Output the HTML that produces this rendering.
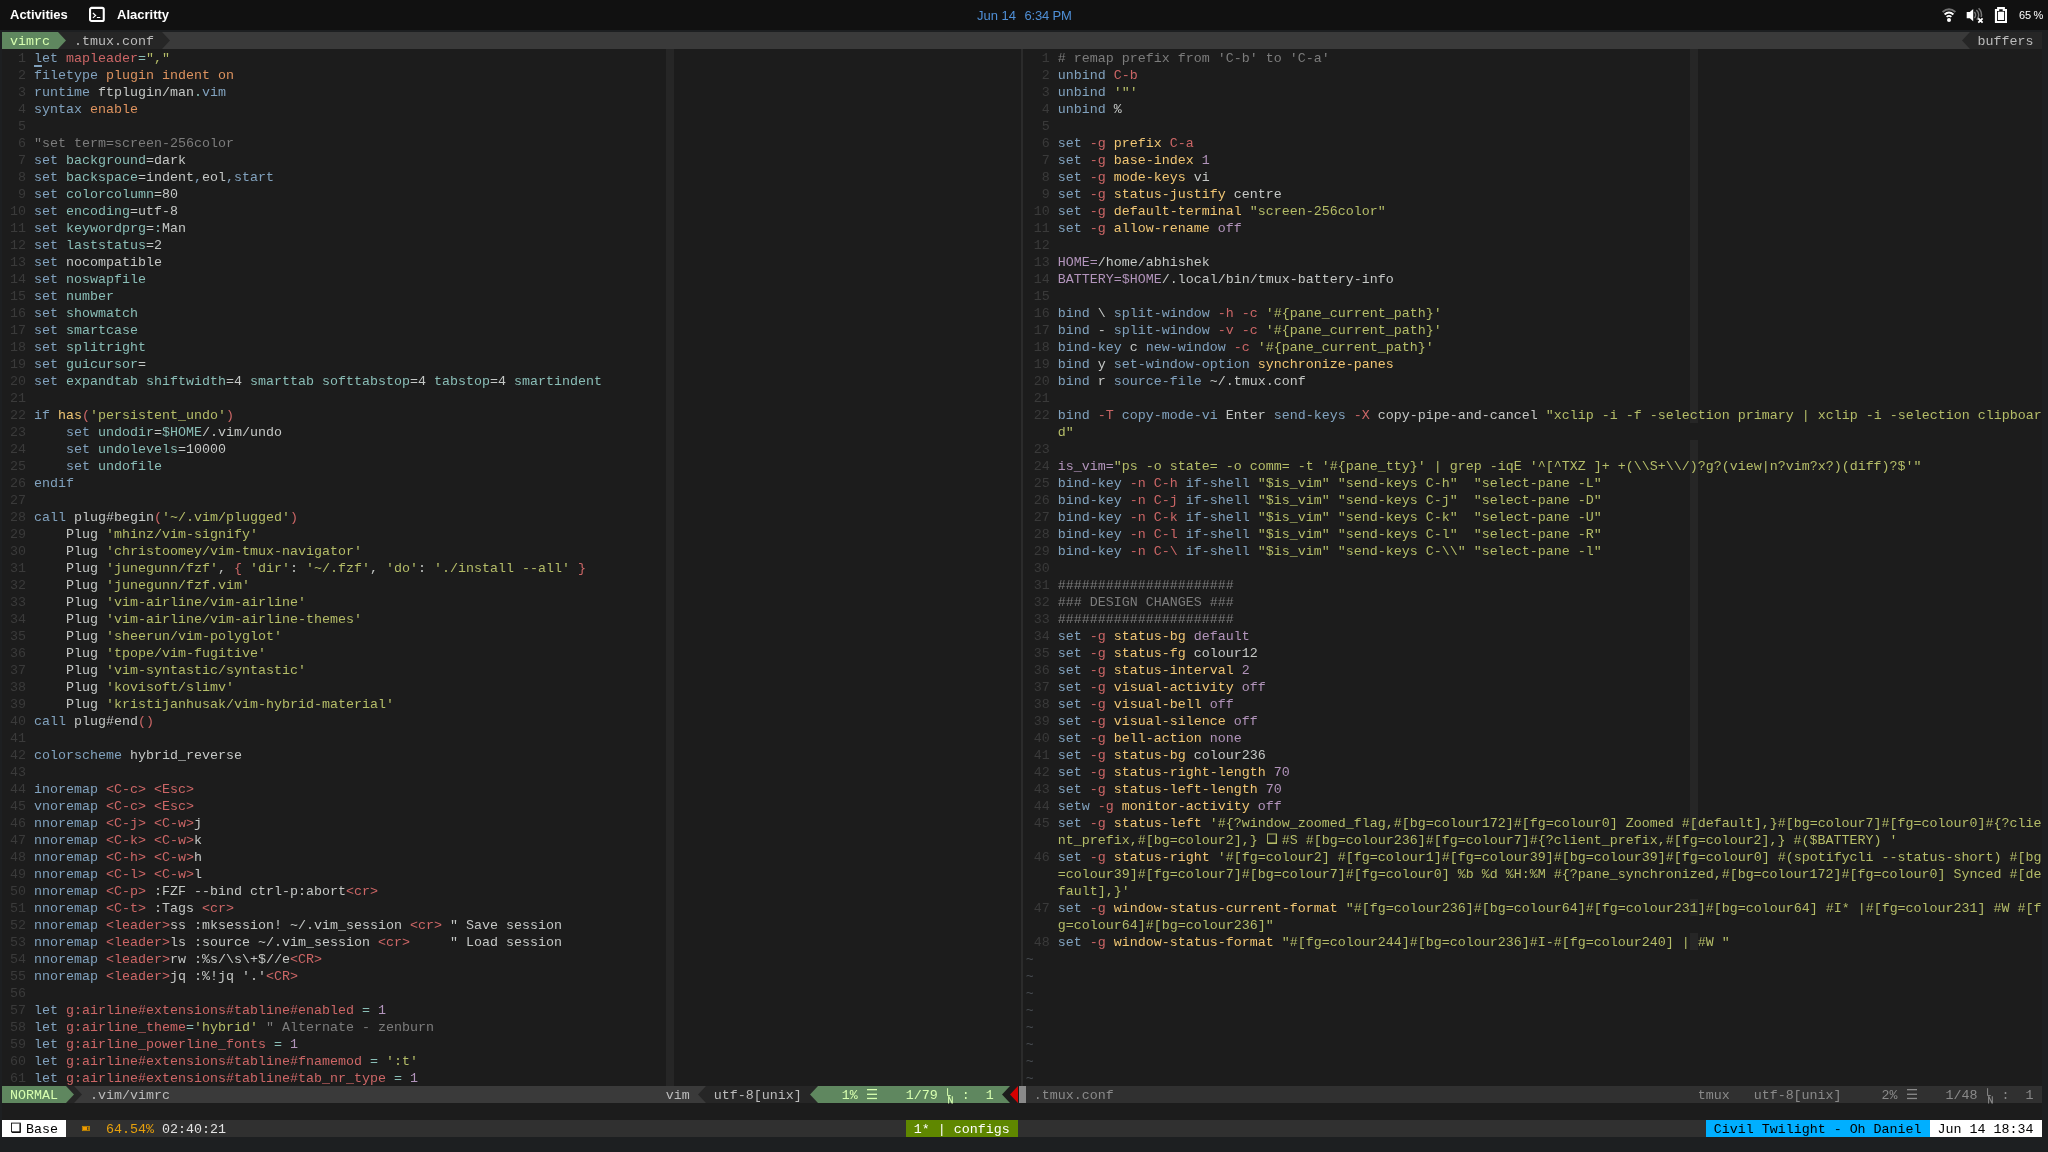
<!DOCTYPE html>
<html><head><meta charset="utf-8"><style>
html,body{margin:0;padding:0;}
body{width:2048px;height:1152px;overflow:hidden;background:#1d1f21;position:relative;}
#vim{position:absolute;left:2px;top:32px;width:2040px;height:1105px;background:#1c1c1c;}
#top{position:absolute;left:0;top:0;width:2048px;height:30px;background:#111111;}
.tb{position:absolute;top:7px;height:16px;line-height:16px;font-family:"Liberation Sans",sans-serif;font-size:13px;font-weight:bold;color:#fff;white-space:pre;}
.bg{position:absolute;height:17px;}
.row{position:absolute;left:2px;height:17px;line-height:17px;font-family:"Liberation Mono",monospace;font-size:13.3312px;white-space:pre;color:#c5c8c6;}
</style></head><body>
<div style="position:absolute;left:0;top:0;width:2048px;height:1152px;will-change:transform">
<div id="vim"></div>

<div id="top"></div>
<div class="tb" style="left:10px;">Activities</div>
<svg style="position:absolute;left:88px;top:6px" width="18" height="17" viewBox="0 0 18 17">
  <rect x="2.05" y="1.9" width="13.7" height="13.1" rx="1.6" ry="1.6" fill="none" stroke="#fff" stroke-width="2.1"/>
  <path d="M4.9 7 L7.6 9.45 L4.9 11.9" fill="none" stroke="#fff" stroke-width="1.25"/>
  <path d="M8.9 11.5 H12.25" stroke="#fff" stroke-width="1.05"/>
</svg>
<div class="tb" style="left:117px;">Alacritty</div>
<div class="tb" style="left:977px;top:8px;color:#4f8fd6;font-weight:normal;">Jun 14</div><div class="tb" style="left:1024.5px;top:8px;color:#4f8fd6;font-weight:normal;letter-spacing:-0.2px">6:34 PM</div>
<svg style="position:absolute;left:1940px;top:6px" width="110" height="20" viewBox="0 0 110 20">
  <g fill="none" stroke-linecap="butt">
    <path d="M2.6 5.9 Q9 0.6 15.4 5.9" stroke="#707070" stroke-width="2"/>
    <path d="M4.6 8.5 Q9 4.6 13.4 8.5" stroke="#fff" stroke-width="2"/>
    <path d="M6.6 10.9 Q9 8.9 11.4 10.9" stroke="#fff" stroke-width="1.8"/>
  </g>
  <circle cx="9" cy="14.1" r="2" fill="#fff"/>
  <path d="M26.7 5.9 H29.8 L33.2 2.9 V15.2 L29.8 12.2 H26.7 Z" fill="#fff"/>
  <path d="M34.4 6 A4.2 4.2 0 0 1 34.4 12" fill="none" stroke="#777" stroke-width="1.4"/>
  <path d="M36.4 4 A6.8 6.8 0 0 1 36.8 13.8" fill="none" stroke="#777" stroke-width="1.4"/>
  <path d="M38.6 2.2 A9.4 9.4 0 0 1 41.2 11" fill="none" stroke="#777" stroke-width="1.5"/>
  <path d="M38.3 12.3 L42.6 16.6 M42.6 12.3 L38.3 16.6" stroke="#fff" stroke-width="1.8"/>
  <path d="M54.9 2.9 H57.1 V1.05 H64.9 V2.9 H67 V17.1 H54.9 Z M57 5.1 H59.2 V3.2 H62.7 V5.1 H65 V14.9 H57 Z" fill="#fff" fill-rule="evenodd"/>
  <rect x="57.9" y="5.7" width="6.2" height="8.3" fill="#fff"/>
</svg>
<div class="tb" style="left:2019px;font-weight:normal;font-size:11px;top:6.6px">65&#8201;%</div>

<div class="bg" style="left:2px;top:32px;width:56px;background:#5f875f"></div>
<div class="bg" style="left:58px;top:32px;width:104px;background:#262626"></div>
<div class="bg" style="left:162px;top:32px;width:1808px;background:#3a3a3a"></div>
<div class="bg" style="left:1970px;top:32px;width:72px;background:#262626"></div>
<div class="bg" style="left:666px;top:49px;width:8px;background:#262626"></div>
<div class="bg" style="left:1690px;top:49px;width:8px;background:#262626"></div>
<div class="bg" style="left:666px;top:66px;width:8px;background:#262626"></div>
<div class="bg" style="left:1690px;top:66px;width:8px;background:#262626"></div>
<div class="bg" style="left:666px;top:83px;width:8px;background:#262626"></div>
<div class="bg" style="left:1690px;top:83px;width:8px;background:#262626"></div>
<div class="bg" style="left:666px;top:100px;width:8px;background:#262626"></div>
<div class="bg" style="left:1690px;top:100px;width:8px;background:#262626"></div>
<div class="bg" style="left:666px;top:117px;width:8px;background:#262626"></div>
<div class="bg" style="left:1690px;top:117px;width:8px;background:#262626"></div>
<div class="bg" style="left:666px;top:134px;width:8px;background:#262626"></div>
<div class="bg" style="left:1690px;top:134px;width:8px;background:#262626"></div>
<div class="bg" style="left:666px;top:151px;width:8px;background:#262626"></div>
<div class="bg" style="left:1690px;top:151px;width:8px;background:#262626"></div>
<div class="bg" style="left:666px;top:168px;width:8px;background:#262626"></div>
<div class="bg" style="left:1690px;top:168px;width:8px;background:#262626"></div>
<div class="bg" style="left:666px;top:185px;width:8px;background:#262626"></div>
<div class="bg" style="left:1690px;top:185px;width:8px;background:#262626"></div>
<div class="bg" style="left:666px;top:202px;width:8px;background:#262626"></div>
<div class="bg" style="left:1690px;top:202px;width:8px;background:#262626"></div>
<div class="bg" style="left:666px;top:219px;width:8px;background:#262626"></div>
<div class="bg" style="left:1690px;top:219px;width:8px;background:#262626"></div>
<div class="bg" style="left:666px;top:236px;width:8px;background:#262626"></div>
<div class="bg" style="left:1690px;top:236px;width:8px;background:#262626"></div>
<div class="bg" style="left:666px;top:253px;width:8px;background:#262626"></div>
<div class="bg" style="left:1690px;top:253px;width:8px;background:#262626"></div>
<div class="bg" style="left:666px;top:270px;width:8px;background:#262626"></div>
<div class="bg" style="left:1690px;top:270px;width:8px;background:#262626"></div>
<div class="bg" style="left:666px;top:287px;width:8px;background:#262626"></div>
<div class="bg" style="left:1690px;top:287px;width:8px;background:#262626"></div>
<div class="bg" style="left:666px;top:304px;width:8px;background:#262626"></div>
<div class="bg" style="left:1690px;top:304px;width:8px;background:#262626"></div>
<div class="bg" style="left:666px;top:321px;width:8px;background:#262626"></div>
<div class="bg" style="left:1690px;top:321px;width:8px;background:#262626"></div>
<div class="bg" style="left:666px;top:338px;width:8px;background:#262626"></div>
<div class="bg" style="left:1690px;top:338px;width:8px;background:#262626"></div>
<div class="bg" style="left:666px;top:355px;width:8px;background:#262626"></div>
<div class="bg" style="left:1690px;top:355px;width:8px;background:#262626"></div>
<div class="bg" style="left:666px;top:372px;width:8px;background:#262626"></div>
<div class="bg" style="left:1690px;top:372px;width:8px;background:#262626"></div>
<div class="bg" style="left:666px;top:389px;width:8px;background:#262626"></div>
<div class="bg" style="left:1690px;top:389px;width:8px;background:#262626"></div>
<div class="bg" style="left:666px;top:406px;width:8px;background:#262626"></div>
<div class="bg" style="left:1690px;top:406px;width:8px;background:#262626"></div>
<div class="bg" style="left:666px;top:423px;width:8px;background:#262626"></div>
<div class="bg" style="left:666px;top:440px;width:8px;background:#262626"></div>
<div class="bg" style="left:1690px;top:440px;width:8px;background:#262626"></div>
<div class="bg" style="left:666px;top:457px;width:8px;background:#262626"></div>
<div class="bg" style="left:1690px;top:457px;width:8px;background:#262626"></div>
<div class="bg" style="left:666px;top:474px;width:8px;background:#262626"></div>
<div class="bg" style="left:1690px;top:474px;width:8px;background:#262626"></div>
<div class="bg" style="left:666px;top:491px;width:8px;background:#262626"></div>
<div class="bg" style="left:1690px;top:491px;width:8px;background:#262626"></div>
<div class="bg" style="left:666px;top:508px;width:8px;background:#262626"></div>
<div class="bg" style="left:1690px;top:508px;width:8px;background:#262626"></div>
<div class="bg" style="left:666px;top:525px;width:8px;background:#262626"></div>
<div class="bg" style="left:1690px;top:525px;width:8px;background:#262626"></div>
<div class="bg" style="left:666px;top:542px;width:8px;background:#262626"></div>
<div class="bg" style="left:1690px;top:542px;width:8px;background:#262626"></div>
<div class="bg" style="left:666px;top:559px;width:8px;background:#262626"></div>
<div class="bg" style="left:1690px;top:559px;width:8px;background:#262626"></div>
<div class="bg" style="left:666px;top:576px;width:8px;background:#262626"></div>
<div class="bg" style="left:1690px;top:576px;width:8px;background:#262626"></div>
<div class="bg" style="left:666px;top:593px;width:8px;background:#262626"></div>
<div class="bg" style="left:1690px;top:593px;width:8px;background:#262626"></div>
<div class="bg" style="left:666px;top:610px;width:8px;background:#262626"></div>
<div class="bg" style="left:1690px;top:610px;width:8px;background:#262626"></div>
<div class="bg" style="left:666px;top:627px;width:8px;background:#262626"></div>
<div class="bg" style="left:1690px;top:627px;width:8px;background:#262626"></div>
<div class="bg" style="left:666px;top:644px;width:8px;background:#262626"></div>
<div class="bg" style="left:1690px;top:644px;width:8px;background:#262626"></div>
<div class="bg" style="left:666px;top:661px;width:8px;background:#262626"></div>
<div class="bg" style="left:1690px;top:661px;width:8px;background:#262626"></div>
<div class="bg" style="left:666px;top:678px;width:8px;background:#262626"></div>
<div class="bg" style="left:1690px;top:678px;width:8px;background:#262626"></div>
<div class="bg" style="left:666px;top:695px;width:8px;background:#262626"></div>
<div class="bg" style="left:1690px;top:695px;width:8px;background:#262626"></div>
<div class="bg" style="left:666px;top:712px;width:8px;background:#262626"></div>
<div class="bg" style="left:1690px;top:712px;width:8px;background:#262626"></div>
<div class="bg" style="left:666px;top:729px;width:8px;background:#262626"></div>
<div class="bg" style="left:1690px;top:729px;width:8px;background:#262626"></div>
<div class="bg" style="left:666px;top:746px;width:8px;background:#262626"></div>
<div class="bg" style="left:1690px;top:746px;width:8px;background:#262626"></div>
<div class="bg" style="left:666px;top:763px;width:8px;background:#262626"></div>
<div class="bg" style="left:1690px;top:763px;width:8px;background:#262626"></div>
<div class="bg" style="left:666px;top:780px;width:8px;background:#262626"></div>
<div class="bg" style="left:1690px;top:780px;width:8px;background:#262626"></div>
<div class="bg" style="left:666px;top:797px;width:8px;background:#262626"></div>
<div class="bg" style="left:1690px;top:797px;width:8px;background:#262626"></div>
<div class="bg" style="left:666px;top:814px;width:8px;background:#262626"></div>
<div class="bg" style="left:1690px;top:814px;width:8px;background:#262626"></div>
<div class="bg" style="left:666px;top:831px;width:8px;background:#262626"></div>
<div class="bg" style="left:666px;top:848px;width:8px;background:#262626"></div>
<div class="bg" style="left:1690px;top:848px;width:8px;background:#262626"></div>
<div class="bg" style="left:666px;top:865px;width:8px;background:#262626"></div>
<div class="bg" style="left:666px;top:882px;width:8px;background:#262626"></div>
<div class="bg" style="left:666px;top:899px;width:8px;background:#262626"></div>
<div class="bg" style="left:1690px;top:899px;width:8px;background:#262626"></div>
<div class="bg" style="left:666px;top:916px;width:8px;background:#262626"></div>
<div class="bg" style="left:666px;top:933px;width:8px;background:#262626"></div>
<div class="bg" style="left:1690px;top:933px;width:8px;background:#262626"></div>
<div class="bg" style="left:666px;top:950px;width:8px;background:#262626"></div>
<div class="bg" style="left:666px;top:967px;width:8px;background:#262626"></div>
<div class="bg" style="left:666px;top:984px;width:8px;background:#262626"></div>
<div class="bg" style="left:666px;top:1001px;width:8px;background:#262626"></div>
<div class="bg" style="left:666px;top:1018px;width:8px;background:#262626"></div>
<div class="bg" style="left:666px;top:1035px;width:8px;background:#262626"></div>
<div class="bg" style="left:666px;top:1052px;width:8px;background:#262626"></div>
<div class="bg" style="left:666px;top:1069px;width:8px;background:#262626"></div>
<div class="bg" style="left:2px;top:1086px;width:64px;background:#5f875f"></div>
<div class="bg" style="left:66px;top:1086px;width:8px;background:#262626"></div>
<div class="bg" style="left:74px;top:1086px;width:632px;background:#3a3a3a"></div>
<div class="bg" style="left:706px;top:1086px;width:112px;background:#262626"></div>
<div class="bg" style="left:818px;top:1086px;width:192px;background:#5f875f"></div>
<div class="bg" style="left:1026px;top:1086px;width:1016px;background:#303030"></div>
<div class="bg" style="left:2px;top:1120px;width:64px;background:#ffffff"></div>
<div class="bg" style="left:66px;top:1120px;width:840px;background:#303030"></div>
<div class="bg" style="left:906px;top:1120px;width:112px;background:#5f8700"></div>
<div class="bg" style="left:1018px;top:1120px;width:688px;background:#303030"></div>
<div class="bg" style="left:1706px;top:1120px;width:224px;background:#00afff"></div>
<div class="bg" style="left:1930px;top:1120px;width:112px;background:#ffffff"></div>
<div class="row" style="top:33px"> <span style="color:#d7ffaf">vimrc   </span><span style="color:#bcbcbc">.tmux.conf                                                                                                                                                                                                                                    buffers</span></div>
<div class="row" style="top:50px">  <span style="color:#3a3a3a">1 </span><span style="color:#81a2be">let </span><span style="color:#cc6666">mapleader</span><span style="color:#8abeb7">=</span><span style="color:#b5bd68">&quot;,&quot;                                                                                                             </span><span style="color:#3a3a3a">1 </span><span style="color:#7c7c7c"># remap prefix from &#x27;C-b&#x27; to &#x27;C-a&#x27;</span></div>
<div class="row" style="top:67px">  <span style="color:#3a3a3a">2 </span><span style="color:#81a2be">filetype </span><span style="color:#de935f">plugin indent on                                                                                                     </span><span style="color:#3a3a3a">2 </span><span style="color:#81a2be">unbind </span><span style="color:#cc6666">C-b</span></div>
<div class="row" style="top:84px">  <span style="color:#3a3a3a">3 </span><span style="color:#81a2be">runtime </span><span style="color:#c5c8c6">ftplugin/man</span><span style="color:#8abeb7">.</span><span style="color:#81a2be">vim                                                                                                      </span><span style="color:#3a3a3a">3 </span><span style="color:#81a2be">unbind </span><span style="color:#b5bd68">&#x27;&quot;&#x27;</span></div>
<div class="row" style="top:101px">  <span style="color:#3a3a3a">4 </span><span style="color:#81a2be">syntax </span><span style="color:#de935f">enable                                                                                                                 </span><span style="color:#3a3a3a">4 </span><span style="color:#81a2be">unbind </span><span style="color:#c5c8c6">%</span></div>
<div class="row" style="top:118px">  <span style="color:#3a3a3a">5                                                                                                                               5</span></div>
<div class="row" style="top:135px">  <span style="color:#3a3a3a">6 </span><span style="color:#7c7c7c">&quot;set term=screen-256color                                                                                                     </span><span style="color:#3a3a3a">6 </span><span style="color:#81a2be">set </span><span style="color:#cc6666">-g </span><span style="color:#f0c674">prefix </span><span style="color:#cc6666">C-a</span></div>
<div class="row" style="top:152px">  <span style="color:#3a3a3a">7 </span><span style="color:#81a2be">set </span><span style="color:#8abeb7">background</span><span style="color:#c5c8c6">=dark                                                                                                           </span><span style="color:#3a3a3a">7 </span><span style="color:#81a2be">set </span><span style="color:#cc6666">-g </span><span style="color:#f0c674">base-index </span><span style="color:#b294bb">1</span></div>
<div class="row" style="top:169px">  <span style="color:#3a3a3a">8 </span><span style="color:#81a2be">set </span><span style="color:#8abeb7">backspace</span><span style="color:#c5c8c6">=indent</span><span style="color:#81a2be">,</span><span style="color:#c5c8c6">eol</span><span style="color:#81a2be">,start                                                                                                </span><span style="color:#3a3a3a">8 </span><span style="color:#81a2be">set </span><span style="color:#cc6666">-g </span><span style="color:#f0c674">mode-keys </span><span style="color:#c5c8c6">vi</span></div>
<div class="row" style="top:186px">  <span style="color:#3a3a3a">9 </span><span style="color:#81a2be">set </span><span style="color:#8abeb7">colorcolumn</span><span style="color:#c5c8c6">=80                                                                                                            </span><span style="color:#3a3a3a">9 </span><span style="color:#81a2be">set </span><span style="color:#cc6666">-g </span><span style="color:#f0c674">status-justify </span><span style="color:#c5c8c6">centre</span></div>
<div class="row" style="top:203px"> <span style="color:#3a3a3a">10 </span><span style="color:#81a2be">set </span><span style="color:#8abeb7">encoding</span><span style="color:#c5c8c6">=utf-8                                                                                                           </span><span style="color:#3a3a3a">10 </span><span style="color:#81a2be">set </span><span style="color:#cc6666">-g </span><span style="color:#f0c674">default-terminal </span><span style="color:#b5bd68">&quot;screen-256color&quot;</span></div>
<div class="row" style="top:220px"> <span style="color:#3a3a3a">11 </span><span style="color:#81a2be">set </span><span style="color:#8abeb7">keywordprg</span><span style="color:#c5c8c6">=</span><span style="color:#8abeb7">:</span><span style="color:#c5c8c6">Man                                                                                                          </span><span style="color:#3a3a3a">11 </span><span style="color:#81a2be">set </span><span style="color:#cc6666">-g </span><span style="color:#f0c674">allow-rename </span><span style="color:#b294bb">off</span></div>
<div class="row" style="top:237px"> <span style="color:#3a3a3a">12 </span><span style="color:#81a2be">set </span><span style="color:#8abeb7">laststatus</span><span style="color:#c5c8c6">=2                                                                                                             </span><span style="color:#3a3a3a">12</span></div>
<div class="row" style="top:254px"> <span style="color:#3a3a3a">13 </span><span style="color:#81a2be">set </span><span style="color:#c5c8c6">nocompatible                                                                                                             </span><span style="color:#3a3a3a">13 </span><span style="color:#b294bb">HOME=</span><span style="color:#c5c8c6">/home/abhishek</span></div>
<div class="row" style="top:271px"> <span style="color:#3a3a3a">14 </span><span style="color:#81a2be">set </span><span style="color:#8abeb7">noswapfile                                                                                                               </span><span style="color:#3a3a3a">14 </span><span style="color:#b294bb">BATTERY=$HOME</span><span style="color:#c5c8c6">/.local/bin/tmux-battery-info</span></div>
<div class="row" style="top:288px"> <span style="color:#3a3a3a">15 </span><span style="color:#81a2be">set </span><span style="color:#8abeb7">number                                                                                                                   </span><span style="color:#3a3a3a">15</span></div>
<div class="row" style="top:305px"> <span style="color:#3a3a3a">16 </span><span style="color:#81a2be">set </span><span style="color:#8abeb7">showmatch                                                                                                                </span><span style="color:#3a3a3a">16 </span><span style="color:#81a2be">bind </span><span style="color:#c5c8c6">\ </span><span style="color:#81a2be">split-window </span><span style="color:#cc6666">-h -c </span><span style="color:#b5bd68">&#x27;#{pane_current_path}&#x27;</span></div>
<div class="row" style="top:322px"> <span style="color:#3a3a3a">17 </span><span style="color:#81a2be">set </span><span style="color:#8abeb7">smartcase                                                                                                                </span><span style="color:#3a3a3a">17 </span><span style="color:#81a2be">bind </span><span style="color:#c5c8c6">- </span><span style="color:#81a2be">split-window </span><span style="color:#cc6666">-v -c </span><span style="color:#b5bd68">&#x27;#{pane_current_path}&#x27;</span></div>
<div class="row" style="top:339px"> <span style="color:#3a3a3a">18 </span><span style="color:#81a2be">set </span><span style="color:#8abeb7">splitright                                                                                                               </span><span style="color:#3a3a3a">18 </span><span style="color:#81a2be">bind-key </span><span style="color:#c5c8c6">c </span><span style="color:#81a2be">new-window </span><span style="color:#cc6666">-c </span><span style="color:#b5bd68">&#x27;#{pane_current_path}&#x27;</span></div>
<div class="row" style="top:356px"> <span style="color:#3a3a3a">19 </span><span style="color:#81a2be">set </span><span style="color:#8abeb7">guicursor</span><span style="color:#c5c8c6">=                                                                                                               </span><span style="color:#3a3a3a">19 </span><span style="color:#81a2be">bind </span><span style="color:#c5c8c6">y </span><span style="color:#81a2be">set-window-option </span><span style="color:#f0c674">synchronize-panes</span></div>
<div class="row" style="top:373px"> <span style="color:#3a3a3a">20 </span><span style="color:#81a2be">set </span><span style="color:#8abeb7">expandtab shiftwidth</span><span style="color:#c5c8c6">=4 </span><span style="color:#8abeb7">smarttab softtabstop</span><span style="color:#c5c8c6">=4 </span><span style="color:#8abeb7">tabstop</span><span style="color:#c5c8c6">=4 </span><span style="color:#8abeb7">smartindent                                                      </span><span style="color:#3a3a3a">20 </span><span style="color:#81a2be">bind </span><span style="color:#c5c8c6">r </span><span style="color:#81a2be">source-file </span><span style="color:#c5c8c6">~/.tmux.conf</span></div>
<div class="row" style="top:390px"> <span style="color:#3a3a3a">21                                                                                                                              21</span></div>
<div class="row" style="top:407px"> <span style="color:#3a3a3a">22 </span><span style="color:#81a2be">if </span><span style="color:#f0c674">has</span><span style="color:#cc6666">(</span><span style="color:#b5bd68">&#x27;persistent_undo&#x27;</span><span style="color:#cc6666">)                                                                                                    </span><span style="color:#3a3a3a">22 </span><span style="color:#81a2be">bind </span><span style="color:#cc6666">-T </span><span style="color:#81a2be">copy-mode-vi </span><span style="color:#c5c8c6">Enter </span><span style="color:#81a2be">send-keys </span><span style="color:#cc6666">-X </span><span style="color:#c5c8c6">copy-pipe-and-cancel </span><span style="color:#b5bd68">&quot;xclip -i -f -selection primary | xclip -i -selection clipboar</span></div>
<div class="row" style="top:424px"> <span style="color:#3a3a3a">23     </span><span style="color:#81a2be">set </span><span style="color:#8abeb7">undodir</span><span style="color:#c5c8c6">=</span><span style="color:#8abeb7">$HOME</span><span style="color:#c5c8c6">/.vim/undo                                                                                                 </span><span style="color:#b5bd68">d&quot;</span></div>
<div class="row" style="top:441px"> <span style="color:#3a3a3a">24     </span><span style="color:#81a2be">set </span><span style="color:#8abeb7">undolevels</span><span style="color:#c5c8c6">=10000                                                                                                     </span><span style="color:#3a3a3a">23</span></div>
<div class="row" style="top:458px"> <span style="color:#3a3a3a">25     </span><span style="color:#81a2be">set </span><span style="color:#8abeb7">undofile                                                                                                             </span><span style="color:#3a3a3a">24 </span><span style="color:#b294bb">is_vim=</span><span style="color:#b5bd68">&quot;ps -o state= -o comm= -t &#x27;#{pane_tty}&#x27; | grep -iqE &#x27;^[^TXZ ]+ +(\\S+\\/)?g?(view|n?vim?x?)(diff)?$&#x27;&quot;</span></div>
<div class="row" style="top:475px"> <span style="color:#3a3a3a">26 </span><span style="color:#81a2be">endif                                                                                                                        </span><span style="color:#3a3a3a">25 </span><span style="color:#81a2be">bind-key </span><span style="color:#cc6666">-n C-h </span><span style="color:#81a2be">if-shell </span><span style="color:#b5bd68">&quot;$is_vim&quot; &quot;send-keys C-h&quot;  &quot;select-pane -L&quot;</span></div>
<div class="row" style="top:492px"> <span style="color:#3a3a3a">27                                                                                                                              26 </span><span style="color:#81a2be">bind-key </span><span style="color:#cc6666">-n C-j </span><span style="color:#81a2be">if-shell </span><span style="color:#b5bd68">&quot;$is_vim&quot; &quot;send-keys C-j&quot;  &quot;select-pane -D&quot;</span></div>
<div class="row" style="top:509px"> <span style="color:#3a3a3a">28 </span><span style="color:#81a2be">call </span><span style="color:#c5c8c6">plug#begin</span><span style="color:#cc6666">(</span><span style="color:#b5bd68">&#x27;~/.vim/plugged&#x27;</span><span style="color:#cc6666">)                                                                                            </span><span style="color:#3a3a3a">27 </span><span style="color:#81a2be">bind-key </span><span style="color:#cc6666">-n C-k </span><span style="color:#81a2be">if-shell </span><span style="color:#b5bd68">&quot;$is_vim&quot; &quot;send-keys C-k&quot;  &quot;select-pane -U&quot;</span></div>
<div class="row" style="top:526px"> <span style="color:#3a3a3a">29     </span><span style="color:#c5c8c6">Plug </span><span style="color:#b5bd68">&#x27;mhinz/vim-signify&#x27;                                                                                                 </span><span style="color:#3a3a3a">28 </span><span style="color:#81a2be">bind-key </span><span style="color:#cc6666">-n C-l </span><span style="color:#81a2be">if-shell </span><span style="color:#b5bd68">&quot;$is_vim&quot; &quot;send-keys C-l&quot;  &quot;select-pane -R&quot;</span></div>
<div class="row" style="top:543px"> <span style="color:#3a3a3a">30     </span><span style="color:#c5c8c6">Plug </span><span style="color:#b5bd68">&#x27;christoomey/vim-tmux-navigator&#x27;                                                                                    </span><span style="color:#3a3a3a">29 </span><span style="color:#81a2be">bind-key </span><span style="color:#cc6666">-n C-\ </span><span style="color:#81a2be">if-shell </span><span style="color:#b5bd68">&quot;$is_vim&quot; &quot;send-keys C-\\&quot; &quot;select-pane -l&quot;</span></div>
<div class="row" style="top:560px"> <span style="color:#3a3a3a">31     </span><span style="color:#c5c8c6">Plug </span><span style="color:#b5bd68">&#x27;junegunn/fzf&#x27;</span><span style="color:#c5c8c6">, </span><span style="color:#cc6666">{ </span><span style="color:#b5bd68">&#x27;dir&#x27;</span><span style="color:#c5c8c6">: </span><span style="color:#b5bd68">&#x27;~/.fzf&#x27;</span><span style="color:#c5c8c6">, </span><span style="color:#b5bd68">&#x27;do&#x27;</span><span style="color:#c5c8c6">: </span><span style="color:#b5bd68">&#x27;./install --all&#x27; </span><span style="color:#cc6666">}                                                        </span><span style="color:#3a3a3a">30</span></div>
<div class="row" style="top:577px"> <span style="color:#3a3a3a">32     </span><span style="color:#c5c8c6">Plug </span><span style="color:#b5bd68">&#x27;junegunn/fzf.vim&#x27;                                                                                                  </span><span style="color:#3a3a3a">31 </span><span style="color:#7c7c7c">######################</span></div>
<div class="row" style="top:594px"> <span style="color:#3a3a3a">33     </span><span style="color:#c5c8c6">Plug </span><span style="color:#b5bd68">&#x27;vim-airline/vim-airline&#x27;                                                                                           </span><span style="color:#3a3a3a">32 </span><span style="color:#7c7c7c">### DESIGN CHANGES ###</span></div>
<div class="row" style="top:611px"> <span style="color:#3a3a3a">34     </span><span style="color:#c5c8c6">Plug </span><span style="color:#b5bd68">&#x27;vim-airline/vim-airline-themes&#x27;                                                                                    </span><span style="color:#3a3a3a">33 </span><span style="color:#7c7c7c">######################</span></div>
<div class="row" style="top:628px"> <span style="color:#3a3a3a">35     </span><span style="color:#c5c8c6">Plug </span><span style="color:#b5bd68">&#x27;sheerun/vim-polyglot&#x27;                                                                                              </span><span style="color:#3a3a3a">34 </span><span style="color:#81a2be">set </span><span style="color:#cc6666">-g </span><span style="color:#f0c674">status-bg </span><span style="color:#b294bb">default</span></div>
<div class="row" style="top:645px"> <span style="color:#3a3a3a">36     </span><span style="color:#c5c8c6">Plug </span><span style="color:#b5bd68">&#x27;tpope/vim-fugitive&#x27;                                                                                                </span><span style="color:#3a3a3a">35 </span><span style="color:#81a2be">set </span><span style="color:#cc6666">-g </span><span style="color:#f0c674">status-fg </span><span style="color:#c5c8c6">colour12</span></div>
<div class="row" style="top:662px"> <span style="color:#3a3a3a">37     </span><span style="color:#c5c8c6">Plug </span><span style="color:#b5bd68">&#x27;vim-syntastic/syntastic&#x27;                                                                                           </span><span style="color:#3a3a3a">36 </span><span style="color:#81a2be">set </span><span style="color:#cc6666">-g </span><span style="color:#f0c674">status-interval </span><span style="color:#b294bb">2</span></div>
<div class="row" style="top:679px"> <span style="color:#3a3a3a">38     </span><span style="color:#c5c8c6">Plug </span><span style="color:#b5bd68">&#x27;kovisoft/slimv&#x27;                                                                                                    </span><span style="color:#3a3a3a">37 </span><span style="color:#81a2be">set </span><span style="color:#cc6666">-g </span><span style="color:#f0c674">visual-activity </span><span style="color:#b294bb">off</span></div>
<div class="row" style="top:696px"> <span style="color:#3a3a3a">39     </span><span style="color:#c5c8c6">Plug </span><span style="color:#b5bd68">&#x27;kristijanhusak/vim-hybrid-material&#x27;                                                                                </span><span style="color:#3a3a3a">38 </span><span style="color:#81a2be">set </span><span style="color:#cc6666">-g </span><span style="color:#f0c674">visual-bell </span><span style="color:#b294bb">off</span></div>
<div class="row" style="top:713px"> <span style="color:#3a3a3a">40 </span><span style="color:#81a2be">call </span><span style="color:#c5c8c6">plug#end</span><span style="color:#cc6666">()                                                                                                              </span><span style="color:#3a3a3a">39 </span><span style="color:#81a2be">set </span><span style="color:#cc6666">-g </span><span style="color:#f0c674">visual-silence </span><span style="color:#b294bb">off</span></div>
<div class="row" style="top:730px"> <span style="color:#3a3a3a">41                                                                                                                              40 </span><span style="color:#81a2be">set </span><span style="color:#cc6666">-g </span><span style="color:#f0c674">bell-action </span><span style="color:#b294bb">none</span></div>
<div class="row" style="top:747px"> <span style="color:#3a3a3a">42 </span><span style="color:#81a2be">colorscheme </span><span style="color:#c5c8c6">hybrid_reverse                                                                                                   </span><span style="color:#3a3a3a">41 </span><span style="color:#81a2be">set </span><span style="color:#cc6666">-g </span><span style="color:#f0c674">status-bg </span><span style="color:#c5c8c6">colour236</span></div>
<div class="row" style="top:764px"> <span style="color:#3a3a3a">43                                                                                                                              42 </span><span style="color:#81a2be">set </span><span style="color:#cc6666">-g </span><span style="color:#f0c674">status-right-length </span><span style="color:#b294bb">70</span></div>
<div class="row" style="top:781px"> <span style="color:#3a3a3a">44 </span><span style="color:#81a2be">inoremap </span><span style="color:#cc6666">&lt;C-c&gt; &lt;Esc&gt;                                                                                                         </span><span style="color:#3a3a3a">43 </span><span style="color:#81a2be">set </span><span style="color:#cc6666">-g </span><span style="color:#f0c674">status-left-length </span><span style="color:#b294bb">70</span></div>
<div class="row" style="top:798px"> <span style="color:#3a3a3a">45 </span><span style="color:#81a2be">vnoremap </span><span style="color:#cc6666">&lt;C-c&gt; &lt;Esc&gt;                                                                                                         </span><span style="color:#3a3a3a">44 </span><span style="color:#81a2be">setw </span><span style="color:#cc6666">-g </span><span style="color:#f0c674">monitor-activity </span><span style="color:#b294bb">off</span></div>
<div class="row" style="top:815px"> <span style="color:#3a3a3a">46 </span><span style="color:#81a2be">nnoremap </span><span style="color:#cc6666">&lt;C-j&gt; &lt;C-w&gt;</span><span style="color:#c5c8c6">j                                                                                                        </span><span style="color:#3a3a3a">45 </span><span style="color:#81a2be">set </span><span style="color:#cc6666">-g </span><span style="color:#f0c674">status-left </span><span style="color:#b5bd68">&#x27;#{?window_zoomed_flag,#[bg=colour172]#[fg=colour0] Zoomed #[default],}#[bg=colour7]#[fg=colour0]#{?clie</span></div>
<div class="row" style="top:832px"> <span style="color:#3a3a3a">47 </span><span style="color:#81a2be">nnoremap </span><span style="color:#cc6666">&lt;C-k&gt; &lt;C-w&gt;</span><span style="color:#c5c8c6">k                                                                                                           </span><span style="color:#b5bd68">nt_prefix,#[bg=colour2],}   #S #[bg=colour236]#[fg=colour7]#{?client_prefix,#[fg=colour2],} #($BATTERY) &#x27;</span></div>
<div class="row" style="top:849px"> <span style="color:#3a3a3a">48 </span><span style="color:#81a2be">nnoremap </span><span style="color:#cc6666">&lt;C-h&gt; &lt;C-w&gt;</span><span style="color:#c5c8c6">h                                                                                                        </span><span style="color:#3a3a3a">46 </span><span style="color:#81a2be">set </span><span style="color:#cc6666">-g </span><span style="color:#f0c674">status-right </span><span style="color:#b5bd68">&#x27;#[fg=colour2] #[fg=colour1]#[fg=colour39]#[bg=colour39]#[fg=colour0] #(spotifycli --status-short) #[bg</span></div>
<div class="row" style="top:866px"> <span style="color:#3a3a3a">49 </span><span style="color:#81a2be">nnoremap </span><span style="color:#cc6666">&lt;C-l&gt; &lt;C-w&gt;</span><span style="color:#c5c8c6">l                                                                                                           </span><span style="color:#b5bd68">=colour39]#[fg=colour7]#[bg=colour7]#[fg=colour0] %b %d %H:%M #{?pane_synchronized,#[bg=colour172]#[fg=colour0] Synced #[de</span></div>
<div class="row" style="top:883px"> <span style="color:#3a3a3a">50 </span><span style="color:#81a2be">nnoremap </span><span style="color:#cc6666">&lt;C-p&gt; </span><span style="color:#c5c8c6">:FZF --bind ctrl-p:abort</span><span style="color:#cc6666">&lt;cr&gt;                                                                                     </span><span style="color:#b5bd68">fault],}&#x27;</span></div>
<div class="row" style="top:900px"> <span style="color:#3a3a3a">51 </span><span style="color:#81a2be">nnoremap </span><span style="color:#cc6666">&lt;C-t&gt; </span><span style="color:#c5c8c6">:Tags </span><span style="color:#cc6666">&lt;cr&gt;                                                                                                    </span><span style="color:#3a3a3a">47 </span><span style="color:#81a2be">set </span><span style="color:#cc6666">-g </span><span style="color:#f0c674">window-status-current-format </span><span style="color:#b5bd68">&quot;#[fg=colour236]#[bg=colour64]#[fg=colour231]#[bg=colour64] #I* |#[fg=colour231] #W #[f</span></div>
<div class="row" style="top:917px"> <span style="color:#3a3a3a">52 </span><span style="color:#81a2be">nnoremap </span><span style="color:#cc6666">&lt;leader&gt;</span><span style="color:#c5c8c6">ss :mksession! ~/.vim_session </span><span style="color:#cc6666">&lt;cr&gt; </span><span style="color:#c5c8c6">&quot; Save session                                                              </span><span style="color:#b5bd68">g=colour64]#[bg=colour236]&quot;</span></div>
<div class="row" style="top:934px"> <span style="color:#3a3a3a">53 </span><span style="color:#81a2be">nnoremap </span><span style="color:#cc6666">&lt;leader&gt;</span><span style="color:#c5c8c6">ls :source ~/.vim_session </span><span style="color:#cc6666">&lt;cr&gt;     </span><span style="color:#c5c8c6">&quot; Load session                                                           </span><span style="color:#3a3a3a">48 </span><span style="color:#81a2be">set </span><span style="color:#cc6666">-g </span><span style="color:#f0c674">window-status-format </span><span style="color:#b5bd68">&quot;#[fg=colour244]#[bg=colour236]#I-#[fg=colour240] | #W &quot;</span></div>
<div class="row" style="top:951px"> <span style="color:#3a3a3a">54 </span><span style="color:#81a2be">nnoremap </span><span style="color:#cc6666">&lt;leader&gt;</span><span style="color:#c5c8c6">rw :%s/\s\+$//e</span><span style="color:#cc6666">&lt;CR&gt;                                                                                        </span><span style="color:#474b50">~</span></div>
<div class="row" style="top:968px"> <span style="color:#3a3a3a">55 </span><span style="color:#81a2be">nnoremap </span><span style="color:#cc6666">&lt;leader&gt;</span><span style="color:#c5c8c6">jq :%!jq &#x27;.&#x27;</span><span style="color:#cc6666">&lt;CR&gt;                                                                                           </span><span style="color:#474b50">~</span></div>
<div class="row" style="top:985px"> <span style="color:#3a3a3a">56                                                                                                                             </span><span style="color:#474b50">~</span></div>
<div class="row" style="top:1002px"> <span style="color:#3a3a3a">57 </span><span style="color:#81a2be">let </span><span style="color:#cc6666">g:airline#extensions#tabline#enabled </span><span style="color:#8abeb7">= </span><span style="color:#b294bb">1                                                                                </span><span style="color:#474b50">~</span></div>
<div class="row" style="top:1019px"> <span style="color:#3a3a3a">58 </span><span style="color:#81a2be">let </span><span style="color:#cc6666">g:airline_theme</span><span style="color:#8abeb7">=</span><span style="color:#b5bd68">&#x27;hybrid&#x27; </span><span style="color:#7c7c7c">&quot; Alternate - zenburn                                                                          </span><span style="color:#474b50">~</span></div>
<div class="row" style="top:1036px"> <span style="color:#3a3a3a">59 </span><span style="color:#81a2be">let </span><span style="color:#cc6666">g:airline_powerline_fonts </span><span style="color:#8abeb7">= </span><span style="color:#b294bb">1                                                                                           </span><span style="color:#474b50">~</span></div>
<div class="row" style="top:1053px"> <span style="color:#3a3a3a">60 </span><span style="color:#81a2be">let </span><span style="color:#cc6666">g:airline#extensions#tabline#fnamemod </span><span style="color:#8abeb7">= </span><span style="color:#b5bd68">&#x27;:t&#x27;                                                                            </span><span style="color:#474b50">~</span></div>
<div class="row" style="top:1070px"> <span style="color:#3a3a3a">61 </span><span style="color:#81a2be">let </span><span style="color:#cc6666">g:airline#extensions#tabline#tab_nr_type </span><span style="color:#8abeb7">= </span><span style="color:#b294bb">1                                                                            </span><span style="color:#474b50">~</span></div>
<div class="row" style="top:1087px"> <span style="color:#d7ffaf">NORMAL    </span><span style="color:#bcbcbc">.vim/vimrc                                                              vim   utf-8[unix]     </span><span style="color:#d7ffaf">1%      1/79   :  1     </span><span style="color:#8a8a8a">.tmux.conf                                                                         tmux   utf-8[unix]     2%      1/48   :  1</span></div>
<div class="row" style="top:1121px">   <span style="color:#000000">Base      </span><span style="color:#e6a00c">64.54% </span><span style="color:#e4e4e4">02:40:21                                                                                      </span><span style="color:#ffffff">1* | configs                                                                                        </span><span style="color:#000000">Civil Twilight - Oh Daniel  Jun 14 18:34</span></div>
</div>
<div style="position:absolute;left:1021px;top:49px;width:2px;height:1042px;background:#2b2b2b"></div><div style="position:absolute;left:34px;top:65px;width:8px;height:2px;background:#81a2be"></div><div style="position:absolute;left:1019px;top:1086px;width:7px;height:17px;background:#8a8a8a"></div>
<svg style="position:absolute;left:0;top:0" width="2048" height="1152">
<polygon points="58,32 66,40.5 58,49" fill="#5f875f"/>
<polygon points="162,32 170,40.5 162,49" fill="#262626"/>
<polygon points="1970,32 1962,40.5 1970,49" fill="#262626"/>
<polygon points="66,1086 74,1094.5 66,1103" fill="#5f875f"/>
<polygon points="74,1086 82,1094.5 74,1103" fill="#262626"/>
<polygon points="706,1086 698,1094.5 706,1103" fill="#262626"/>
<polygon points="818,1086 810,1094.5 818,1103" fill="#5f875f"/>
<polygon points="1010,1086 1002,1094.5 1010,1103" fill="#1c1c1c"/>
<polygon points="1018,1086 1010,1094.5 1018,1103" fill="#d70000"/>
<rect x="867" y="1089.0" width="10" height="1.3" fill="#d7ffaf"/>
<rect x="867" y="1093.65" width="10" height="1.3" fill="#d7ffaf"/>
<rect x="867" y="1097.8000000000002" width="10" height="1.3" fill="#d7ffaf"/>
<path d="M947.6 1088.2 V1095.6 H950.8" fill="none" stroke="#d7ffaf" stroke-width="1"/>
<path d="M948.6 1103.6 V1096.2 L952.3 1103.6 V1096.2" fill="none" stroke="#d7ffaf" stroke-width="1.05"/>
<rect x="1907" y="1089.0" width="10" height="1.3" fill="#8a8a8a"/>
<rect x="1907" y="1093.65" width="10" height="1.3" fill="#8a8a8a"/>
<rect x="1907" y="1097.8000000000002" width="10" height="1.3" fill="#8a8a8a"/>
<path d="M1987.6 1088.2 V1095.6 H1990.8" fill="none" stroke="#8a8a8a" stroke-width="1"/>
<path d="M1988.6 1103.6 V1096.2 L1992.3 1103.6 V1096.2" fill="none" stroke="#8a8a8a" stroke-width="1.05"/>
<rect x="11.5" y="1123.1" width="8.8" height="8.8" fill="none" stroke="#111111" stroke-width="0.9"/>
<path d="M20.1 1123.6 V1132.3 H12" fill="none" stroke="#111111" stroke-width="1.2"/>
<rect x="1267.5" y="834.0" width="9.0" height="9.0" fill="none" stroke="#b5bd68" stroke-width="0.9"/>
<path d="M1276.3 834.5 V843.4 H1268" fill="none" stroke="#b5bd68" stroke-width="1.2"/>
<rect x="82.4" y="1126.4" width="7" height="4.2" fill="none" stroke="#c98a00" stroke-width="0.9"/>
<rect x="83" y="1127" width="4.2" height="3" fill="#f29d00"/>
<rect x="88" y="1127.2" width="0.9" height="2.6" fill="#c98a00"/>
</svg>
</body></html>
